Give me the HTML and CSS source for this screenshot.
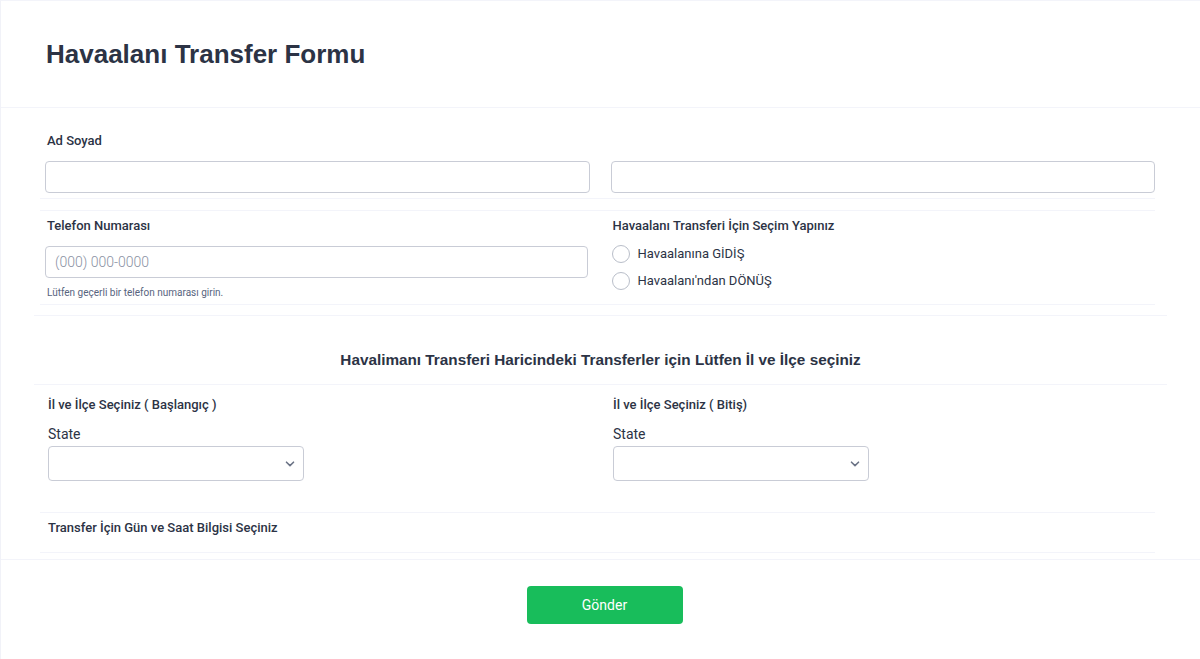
FILE: index.html
```html
<!DOCTYPE html>
<html lang="tr">
<head>
  <meta charset="UTF-8" />
  <title>Havaalanı Transfer Formu</title>
  <link rel="stylesheet" href="styles.css">
</head>
<body>
  <form class="form">
    <!-- Başlık -->
    <header class="form-header">
      <h1>Havaalanı Transfer Formu</h1>
    </header>

    <div class="form-body">
      <!-- Ad Soyad -->
      <div class="row">
        <label class="label">Ad Soyad</label>
        <div class="cols">
          <input type="text" class="input" />
          <input type="text" class="input" />
        </div>
      </div>

      <!-- Telefon + seçim -->
      <div class="row">
        <div class="cols">
          <div class="col">
            <label class="label">Telefon Numarası</label>
            <input type="text" class="input input-phone" placeholder="(000) 000-0000" />
            <span class="hint">Lütfen geçerli bir telefon numarası girin.</span>
          </div>
          <div class="col">
            <label class="label">Havaalanı Transferi İçin Seçim Yapınız</label>
            <div class="radios">
              <label class="radio"><span class="dot"></span>Havaalanına GİDİŞ</label>
              <label class="radio"><span class="dot"></span>Havaalanı'ndan DÖNÜŞ</label>
            </div>
          </div>
        </div>
      </div>

      <!-- Ara başlık -->
      <div class="row row-heading">
        <h2>Havalimanı Transferi Haricindeki Transferler için Lütfen İl ve İlçe seçiniz</h2>
      </div>

      <div class="row row-plain">
        <div class="cols">
          <div class="col">
            <label class="label">İl ve İlçe Seçiniz ( Başlangıç )</label>
            <span class="sub-label">State</span>
            <div class="select">
              <svg width="10" height="6" viewBox="0 0 10 6"><path d="M1.5 1.2 5 4.6 8.5 1.2" fill="none" stroke="#6b7386" stroke-width="1.6" stroke-linecap="round" stroke-linejoin="round"/></svg>
            </div>
          </div>
          <div class="col">
            <label class="label">İl ve İlçe Seçiniz ( Bitiş)</label>
            <span class="sub-label">State</span>
            <div class="select">
              <svg width="10" height="6" viewBox="0 0 10 6"><path d="M1.5 1.2 5 4.6 8.5 1.2" fill="none" stroke="#6b7386" stroke-width="1.6" stroke-linecap="round" stroke-linejoin="round"/></svg>
            </div>
          </div>
        </div>
      </div>

      <div class="row row-last">
        <label class="label">Transfer İçin Gün ve Saat Bilgisi Seçiniz</label>
      </div>
    </div>

    <footer class="form-footer">
      <button type="button" class="submit">Gönder</button>
    </footer>
  </form>
</body>
</html>
```

FILE: styles.css
```css
*{margin:0;padding:0;box-sizing:border-box}
body{
  font-family:Roboto,'Liberation Sans',Arial,sans-serif;
  background:#fff;
  color:#2c3345;
}

.form{width:1200px;height:659px;border-left:1px solid #f1f2f8;border-top:1px solid #f3f4fa}

.form-header{height:107px;padding:37px 45px 0;border-bottom:1px solid #f3f4fa}
.form-header h1{font-family:'Liberation Sans',Arial,sans-serif;font-size:26px;font-weight:700;line-height:32px;color:#2c3345}

.form-body{padding:0 45px 0 39px}

.row{padding:24px 0 4px 5px;border-bottom:1px solid #f3f4fa}
.row:first-child{padding-bottom:5px}
.row + .row{margin-top:11px;border-top:1px solid #f3f4fa;padding-top:6px}

.label{display:block;padding-left:2px;font-size:13px;font-weight:500;line-height:18px;color:#2c3345}
.row > .label{margin-bottom:11px}

.cols{display:flex;gap:21px}
.cols > *{flex:1}
.col .label{margin-bottom:11px}

.input{display:block;width:100%;height:32px;border:1px solid #c9ccd6;border-radius:4px;background:#fff;padding:0 9px;font-family:Roboto,sans-serif;font-size:14px;color:#2c3345;outline:none}
.input-phone{width:543px}
.input::placeholder{color:#8a91a3;font-weight:300}

.hint{display:block;margin-top:8px;padding-left:2px;font-size:10px;line-height:14px;color:#57647e}

.radios{display:flex;flex-direction:column;gap:9px;margin:-1px 0 0 1px}
.radio{display:flex;align-items:center;gap:8px;font-size:13px;line-height:18px;color:#2c3345}
.dot{width:18px;height:18px;border:1px solid #b9bec9;border-radius:50%;background:#fff}

.row.row-heading{margin:10px -12px 0 -6px;padding:34px 0 14px}
.row-heading h2{font-family:'Liberation Sans',Arial,sans-serif;font-size:15.3px;font-weight:700;line-height:20px;text-align:center;color:#2c3345}

.row.row-plain{margin-top:0;border-top:none;padding:11px 0 31px 8px;border-bottom:none}
.row-plain .label{margin-bottom:11px;padding-left:0}
.row-plain .col:last-child{margin-left:2px}

.sub-label{display:block;font-size:14px;line-height:18px;color:#2c3345;margin-bottom:3px}
.select{width:256px;height:35px;border:1px solid #c9ccd6;border-radius:4px;display:flex;align-items:center;justify-content:flex-end;padding-right:8px}

.row.row-last{margin-top:0;padding:6px 0 15px 6px}
.row.row-last .label{margin-bottom:0}

.form-footer{margin-top:6px;border-top:1px solid #f3f4fa;display:flex;justify-content:center;padding:26px 0 0 8px}
.submit{width:156px;height:38px;border:none;border-radius:4px;background:#18bd5b;color:#fff;font-family:Roboto,sans-serif;font-size:14px;cursor:pointer}
```
